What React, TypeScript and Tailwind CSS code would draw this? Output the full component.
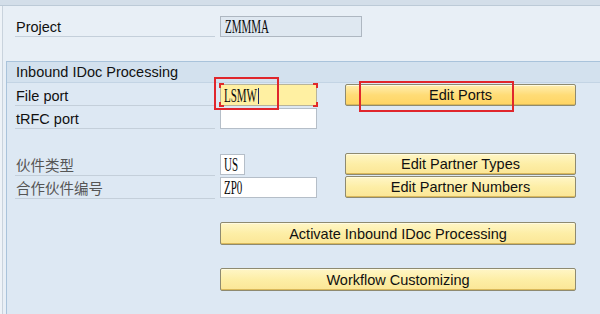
import React from "react";

const sans = { fontFamily: '"Liberation Sans", Arial, sans-serif' };

// SAP GUI style yellow push button
function SapButton({
  label,
  primary = false,
  className = "",
}: {
  label: string;
  primary?: boolean;
  className?: string;
}) {
  return (
    <div
      className={`h-[22px] flex items-center justify-center pt-[2px] rounded-[2px] border border-[#8e8a70] text-[14.5px] text-[#111] shadow-[inset_0_1px_0_#fffbe0,inset_0_-1px_0_#d9b85a] ${
        primary
          ? "bg-gradient-to-b from-[#ffeeae] via-[#ffdc76] to-[#ffd462]"
          : "bg-gradient-to-b from-[#fff6c6] via-[#fdeea6] to-[#fbe696]"
      } ${className}`}
      style={sans}
    >
      {label}
    </div>
  );
}

// Value text rendered in a narrow serif, like SimSun ASCII glyphs
function Value({ text }: { text: string }) {
  return (
    <span
      className="inline-block origin-left scale-x-[0.61] text-[18px] leading-none text-[#0a0a0a] whitespace-nowrap"
      style={{ fontFamily: '"Liberation Serif", "Times New Roman", serif' }}
    >
      {text}
    </span>
  );
}

function Label({
  text,
  cjk = false,
  h = "h-[23px]",
}: {
  text: string;
  cjk?: boolean;
  h?: string;
}) {
  return (
    <div
      className={`w-[200px] ${h} flex items-end leading-[17px] border-b border-[#c4cfda] pl-[1px] ${
        cjk ? "text-[14.5px] text-[#555]" : "text-[14.5px] text-[#111]"
      }`}
      style={
        cjk
          ? { fontFamily: '"Liberation Sans", "Noto Sans CJK SC", sans-serif' }
          : sans
      }
    >
      {text}
    </div>
  );
}

export default function App() {
  return (
    <div className="relative w-[600px] h-[314px] overflow-hidden bg-[#e8eff6] flex flex-col select-none">
      {/* top toolbar strip */}
      <div className="h-[6px] shrink-0 bg-[#d3dee9] border-b border-[#bccad7]" />

      <div className="flex-1 flex">
        <div className="w-[2px] bg-[#eef3f8]" />
        <div className="w-[1px] bg-[#c9d3dd]" />

        <div className="flex-1 flex flex-col">
          {/* Project row */}
          <div className="flex items-start mt-[9px] ml-[12px]">
            <Label text="Project" h="h-[22px]" />
            <div className="ml-[5px] mt-[1px] w-[142px] h-[21px] border border-[#aeb7c1] bg-[#dfe8f1] flex items-center pt-[1px] pl-[4px]">
              <Value text="ZMMMA" />
            </div>
          </div>

          {/* Inbound IDoc Processing section */}
          <div className="mt-[24px] ml-[3px] flex-1 flex flex-col border-l border-t border-[#a9c3db] bg-[#dde8f3]">
            <div
              className="h-[21px] bg-[#d3e1ee] border-b border-[#c3d4e4] flex items-center pt-[2px] pl-[9px] text-[14.5px] text-[#111]"
              style={sans}
            >
              Inbound IDoc Processing
            </div>

            <div className="pl-[8px] flex flex-col">
              {/* File port */}
              <div className="flex items-start h-[23px]">
                <Label text="File port" />
                <div className="relative ml-[5px] mt-[1px] w-[97px] h-[22px] border border-[#b8b49a] bg-[#fff0a2] flex items-center pt-[1px] pl-[3px]">
                  <Value text="LSMW" />
                  <span className="absolute left-[37px] top-[3px] w-[1px] h-[16px] bg-[#1c2a6a]" />
                  {/* focus corner marks */}
                  <span className="absolute -left-[2px] -top-[2px] w-[5px] h-[5px] border-l-2 border-t-2 border-[#e02a2a]" />
                  <span className="absolute -right-[2px] -top-[2px] w-[5px] h-[5px] border-r-2 border-t-2 border-[#e02a2a]" />
                  <span className="absolute -left-[2px] -bottom-[2px] w-[5px] h-[5px] border-l-2 border-b-2 border-[#e02a2a]" />
                  <span className="absolute -right-[2px] -bottom-[2px] w-[5px] h-[5px] border-r-2 border-b-2 border-[#e02a2a]" />
                </div>
                <SapButton label="Edit Ports" primary className="ml-[28px] mt-[1px] w-[231px]" />
              </div>

              {/* tRFC port */}
              <div className="flex items-start h-[23px]">
                <Label text="tRFC port" />
                <div className="ml-[5px] mt-[2px] w-[97px] h-[21px] border border-[#b5bec8] bg-white" />
              </div>

              {/* Partner rows */}
              <div className="flex items-start h-[23px] mt-[24px]">
                <Label text="伙件类型" cjk />
                <div className="ml-[5px] mt-[1px] w-[25px] h-[21px] border border-[#b5bec8] bg-white flex items-center pt-[1px] pl-[3px]">
                  <Value text="US" />
                </div>
                <SapButton label="Edit Partner Types" className="ml-[100px] w-[231px]" />
              </div>
              <div className="flex items-start h-[23px]">
                <Label text="合作伙件编号" cjk />
                <div className="ml-[5px] mt-[1px] w-[97px] h-[21px] border border-[#b5bec8] bg-white flex items-center pt-[1px] pl-[3px]">
                  <Value text="ZP0" />
                </div>
                <SapButton label="Edit Partner Numbers" className="ml-[28px] w-[231px]" />
              </div>

              <SapButton
                label="Activate Inbound IDoc Processing"
                className="ml-[205px] mt-[23px] w-[356px] h-[23px]"
              />
              <SapButton
                label="Workflow Customizing"
                className="ml-[205px] mt-[23px] w-[356px] h-[23px]"
              />
            </div>
          </div>
        </div>
      </div>

      {/* red annotation boxes */}
      <div className="absolute left-[214px] top-[77px] w-[65px] h-[33px] border-2 border-[#e0262c]" />
      <div className="absolute left-[359px] top-[81px] w-[155px] h-[31px] border-2 border-[#e0262c]" />
    </div>
  );
}
